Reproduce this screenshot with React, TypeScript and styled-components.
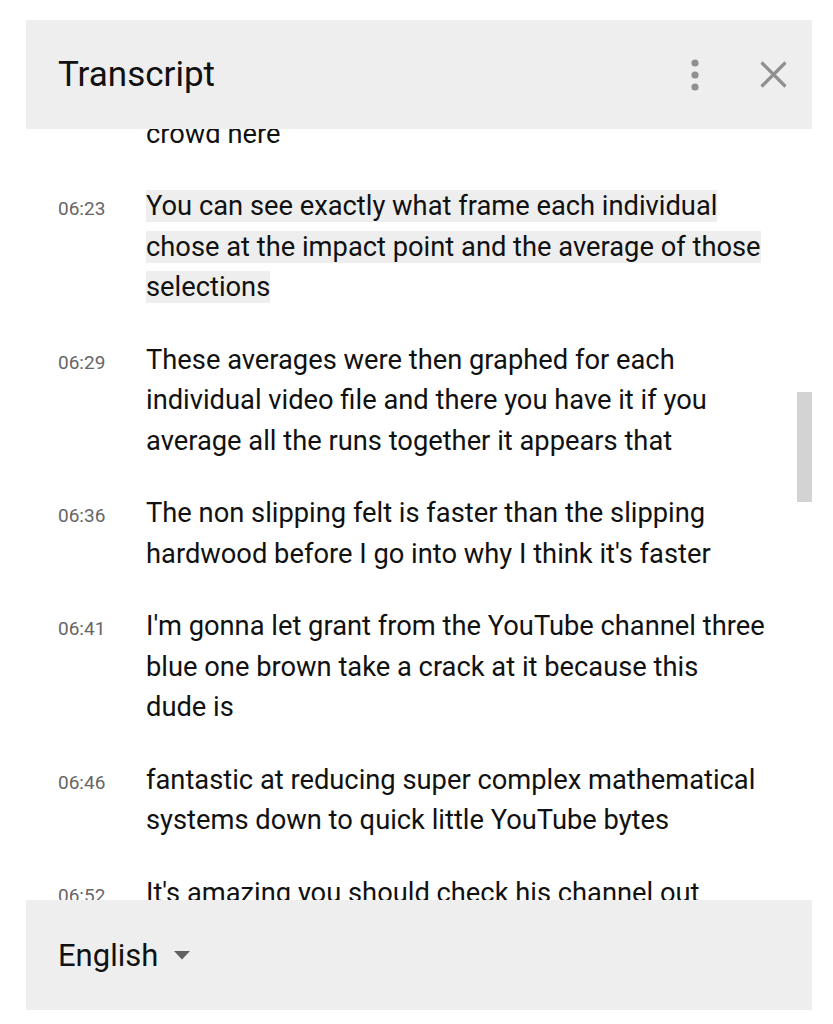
import React, { useLayoutEffect, useRef } from "react";
import styled, { createGlobalStyle } from "styled-components";

const Global = createGlobalStyle`
  html, body { margin: 0; padding: 0; background: #ffffff; }
  body { font-family: Roboto, "Noto Sans", Arial, sans-serif; }
  * { box-sizing: border-box; }
`;

const Page = styled.div`
  padding: 20px 21px 14px 26px;
  height: 1024px;
`;

const Panel = styled.section`
  width: 786px;
  height: 990px;
  display: flex;
  flex-direction: column;
  background: #ffffff;
`;

const Header = styled.header`
  height: 109px;
  flex: none;
  background: #eeeeee;
  display: flex;
  align-items: center;
  padding: 0 18.5px 0 32px;
  z-index: 1;
`;

const Title = styled.h1`
  margin: 0;
  flex: 1;
  font-size: 35px;
  font-weight: 400;
  color: #111111;
`;

const IconButton = styled.button<{ $gap?: number }>`
  border: 0;
  background: none;
  padding: 0;
  width: 40px;
  height: 40px;
  display: flex;
  align-items: center;
  justify-content: center;
  margin-left: ${(p) => p.$gap ?? 0}px;
`;

const Body = styled.div`
  flex: 1;
  overflow: hidden;
  position: relative;
`;

const Scroller = styled.div`
  height: 100%;
  overflow: hidden;
`;

const List = styled.div`
  display: flex;
  flex-direction: column;
  gap: 32px;
  padding-bottom: 40px;
`;

const Row = styled.div`
  display: flex;
  align-items: baseline;
  padding-left: 32px;
  padding-right: 24px;
`;

const Time = styled.div`
  width: 88px;
  flex: none;
  font-size: 19px;
  line-height: 40.5px;
  color: #666666;
`;

const Text = styled.div`
  flex: 1;
  font-size: 27.3px;
  line-height: 40.5px;
  color: #111111;
  white-space: pre-line;
`;

const Mark = styled.span<{ $active?: boolean }>`
  background: ${(p) => (p.$active ? "#eeeeee" : "transparent")};
`;

const Thumb = styled.div`
  position: absolute;
  right: 0;
  width: 15px;
  background: #d3d3d3;
`;

const Footer = styled.footer`
  height: 110px;
  flex: none;
  background: #eeeeee;
  display: flex;
  align-items: center;
  padding: 0 32px;
  z-index: 1;
`;

const Lang = styled.button`
  border: 0;
  background: none;
  padding: 0;
  display: flex;
  align-items: center;
  gap: 16px;
  font-family: inherit;
  font-size: 31px;
  color: #111111;
`;

const segments = [
  { t: "06:17", text: "And then I averaged out the selections of the\ncrowd here", active: false },
  { t: "06:23", text: "You can see exactly what frame each individual\nchose at the impact point and the average of those\nselections", active: true },
  { t: "06:29", text: "These averages were then graphed for each\nindividual video file and there you have it if you\naverage all the runs together it appears that", active: false },
  { t: "06:36", text: "The non slipping felt is faster than the slipping\nhardwood before I go into why I think it's faster", active: false },
  { t: "06:41", text: "I'm gonna let grant from the YouTube channel three\nblue one brown take a crack at it because this\ndude is", active: false },
  { t: "06:46", text: "fantastic at reducing super complex mathematical\nsystems down to quick little YouTube bytes", active: false },
  { t: "06:52", text: "It's amazing you should check his channel out", active: false },
];

export default function App() {
  const ref = useRef<HTMLDivElement>(null);
  useLayoutEffect(() => {
    if (ref.current) ref.current.scrollTop = 56;
  }, []);
  return (
    <>
      <Global />
      <Page>
        <Panel>
          <Header>
            <Title>Transcript</Title>
            <IconButton aria-label="More actions">
              <svg width="8" height="32" viewBox="0 0 8 32">
                <circle cx="4" cy="4" r="3.6" fill="#909090" />
                <circle cx="4" cy="16" r="3.6" fill="#909090" />
                <circle cx="4" cy="28" r="3.6" fill="#909090" />
              </svg>
            </IconButton>
            <IconButton aria-label="Close" $gap={38.5}>
              <svg width="27" height="27" viewBox="0 0 27 27">
                <path d="M1.5 1.5 L25.5 25.5 M25.5 1.5 L1.5 25.5" stroke="#909090" strokeWidth="3.2" />
              </svg>
            </IconButton>
          </Header>
          <Body>
            <Scroller ref={ref}>
              <List>
                {segments.map((s) => (
                  <Row key={s.t}>
                    <Time>{s.t}</Time>
                    <Text>
                      <Mark $active={s.active}>{s.text}</Mark>
                    </Text>
                  </Row>
                ))}
              </List>
            </Scroller>
            <Thumb style={{ top: 263, height: 110 }} />
          </Body>
          <Footer>
            <Lang>
              English
              <svg width="16" height="9" viewBox="0 0 16 9">
                <path d="M0 0 L16 0 L8 8.5 Z" fill="#606060" />
              </svg>
            </Lang>
          </Footer>
        </Panel>
      </Page>
    </>
  );
}
